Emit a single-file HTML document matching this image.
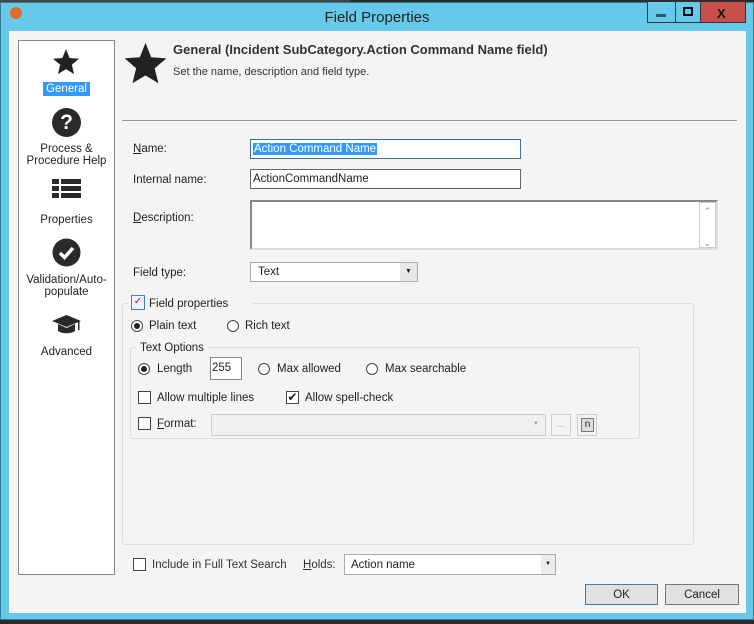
<!DOCTYPE html>
<html><head><style>
*{box-sizing:border-box;margin:0;padding:0}
body{width:754px;height:624px;background:#2b2b2b;position:relative;overflow:hidden;font-family:"Liberation Sans",sans-serif;font-size:11.5px;color:#222}
.a{position:absolute}
.t{position:absolute;white-space:nowrap;margin-top:1px}
.inp{position:absolute;background:#fff;border:1px solid #7a7a7a}
.rad{position:absolute;width:12px;height:12px;border:1px solid #444;border-radius:50%;background:#fff}
.rad.on::after{content:"";position:absolute;left:2px;top:2px;width:6px;height:6px;border-radius:50%;background:#222}
.cb{position:absolute;width:13px;height:13px;border:1px solid #444;background:#fff}
.grp{position:absolute;border:1px solid #dcdcdc;border-radius:3px}
u{text-decoration:underline}
</style></head><body>
<div class="a" style="left:0;top:0;width:350px;height:2px;background:#444"></div>
<div class="a" style="left:0;top:2px;width:754px;height:618px;background:#66c9ea;border:1px solid #3a7a99"></div>
<div class="a" style="left:10px;top:7px;width:12px;height:12px;border-radius:50%;background:#e06a2a"></div>
<div class="t" style="left:0;width:754px;text-align:center;top:8px;font-size:15px;color:#222">Field Properties</div>
<div class="a" style="left:647px;top:1px;width:99px;height:22px;border:1px solid #333;background:#66c9ea"></div>
<div class="a" style="left:675px;top:1px;width:1px;height:22px;background:#333"></div>
<div class="a" style="left:700px;top:1px;width:46px;height:22px;background:#c7514a;border:1px solid #333"></div>
<div class="a" style="left:656px;top:14px;width:10px;height:3px;background:#2a5a70"></div>
<div class="a" style="left:683px;top:7px;width:10px;height:9px;border:2px solid #111"></div>
<div class="t" style="left:717px;top:5px;font-size:13px;font-weight:bold;color:#111">X</div>
<div class="a" style="left:9px;top:31px;width:737px;height:582px;background:#f4f4f4"></div>

<div class="a" style="left:18px;top:40px;width:97px;height:535px;background:#fff;border:1px solid #888"></div>
<svg class="a" style="left:52px;top:48px" width="28" height="28" viewBox="0 0 24 24"><path d="M12 1l3.1 7.6 8 .6-6.1 5.2 1.9 8L12 18.1 5.1 22.4l1.9-8L.9 9.2l8-.6z" fill="#222"/></svg>
<div class="t" style="left:43px;top:81px;background:#3399ff;color:#fff;padding:1px 3px;font-size:11.5px">General</div>
<div class="a" style="left:52px;top:108px;width:29px;height:29px;border-radius:50%;background:#2a2a2a;color:#fff;font-weight:bold;font-size:21px;text-align:center;line-height:29px">?</div>
<div class="t" style="left:18px;width:97px;text-align:center;top:142px;line-height:12px">Process &amp;<br>Procedure Help</div>
<svg class="a" style="left:52px;top:179px" width="29" height="20"><g fill="#2a2a2a"><rect x="0" y="0" width="7" height="5"/><rect x="9" y="0" width="20" height="5"/><rect x="0" y="7" width="7" height="5"/><rect x="9" y="7" width="20" height="5"/><rect x="0" y="14" width="7" height="5"/><rect x="9" y="14" width="20" height="5"/></g></svg>
<div class="t" style="left:18px;width:97px;text-align:center;top:213px">Properties</div>
<svg class="a" style="left:52px;top:238px" width="29" height="29"><circle cx="14.5" cy="14.5" r="14" fill="#2a2a2a"/><path d="M8 15l4.5 4.5L21 10" stroke="#fff" stroke-width="3.5" fill="none"/></svg>
<div class="t" style="left:18px;width:97px;text-align:center;top:273px;line-height:12px">Validation/Auto-<br>populate</div>
<svg class="a" style="left:52px;top:314px" width="29" height="22"><path d="M14.5 1L29 7l-14.5 6L0 7z" fill="#2a2a2a"/><path d="M6 10v7c4 3 13 3 17 0v-7l-8.5 4z" fill="#2a2a2a"/><rect x="26" y="7" width="1.5" height="9" fill="#2a2a2a"/></svg>
<div class="t" style="left:18px;width:97px;text-align:center;top:345px">Advanced</div>

<svg class="a" style="left:123px;top:42px" width="45" height="44" viewBox="0 0 24 24"><path d="M12 .5l3.1 7.8 8.3.6-6.4 5.4 2 8.2L12 18.2 4.9 22.5l2-8.2L.6 8.9l8.3-.6z" fill="#222"/></svg>
<div class="t" style="left:173px;top:41px;font-weight:bold;font-size:13px;color:#333">General (Incident SubCategory.Action Command Name field)</div>
<div class="t" style="left:173px;top:65px;font-size:11px;color:#333">Set the name, description and field type.</div>
<div class="a" style="left:122px;top:120px;width:615px;height:1px;background:#999"></div>

<div class="t" style="left:133px;top:142px"><u>N</u>ame:</div>
<div class="t" style="left:133px;top:173px">Internal name:</div>
<div class="t" style="left:133px;top:211px"><u>D</u>escription:</div>
<div class="t" style="left:133px;top:266px">Field type:</div>
<div class="inp" style="left:250px;top:139px;width:271px;height:20px;border-color:#3c6e9e"><span class="a" style="left:2px;top:3px;background:#3399ff;color:#fff;padding:0 1px">Action Command Name</span></div>
<div class="inp" style="left:250px;top:169px;width:271px;height:20px;border-color:#666"><span class="a" style="left:2px;top:3px">ActionCommandName</span></div>
<div class="inp" style="left:250px;top:200px;width:468px;height:50px;border:2px solid #888;border-right-color:#ddd;border-bottom-color:#ddd"><div class="a" style="right:0;top:0;width:17px;height:46px;border:1px solid #ccc;color:#888;font-size:9px;text-align:center;line-height:16px">⌃<br><br>⌄</div></div>
<div class="inp" style="left:250px;top:262px;width:168px;height:20px;border-color:#aaa"><span class="a" style="left:7px;top:3px">Text</span><div class="a" style="right:0;top:0;width:17px;height:18px;background:#e8e8e8;font-size:7px;text-align:center;line-height:18px">▼</div></div>

<div class="grp" style="left:122px;top:303px;width:572px;height:242px"></div>
<div class="a" style="left:128px;top:295px;width:125px;height:14px;background:#f4f4f4"></div>
<div class="a" style="left:131px;top:295px;width:14px;height:15px;border:1px solid #4a7fb5;background:#eef4fb;color:#c00;font-size:10px;line-height:12px;text-align:center">✓</div>
<div class="t" style="left:149px;top:297px">Field properties</div>
<div class="rad on" style="left:131px;top:320px"></div><div class="t" style="left:149px;top:319px">Plain text</div>
<div class="rad" style="left:227px;top:320px"></div><div class="t" style="left:245px;top:319px">Rich text</div>

<div class="grp" style="left:130px;top:347px;width:510px;height:92px"></div>
<div class="a" style="left:136px;top:341px;width:72px;height:12px;background:#f4f4f4"></div>
<div class="t" style="left:140px;top:341px">Text Options</div>
<div class="rad on" style="left:138px;top:363px"></div><div class="t" style="left:157px;top:362px">Length</div>
<div class="inp" style="left:210px;top:357px;width:32px;height:23px;border-color:#888"><span class="a" style="left:1px;top:4px">255</span></div>
<div class="rad" style="left:258px;top:363px"></div><div class="t" style="left:277px;top:362px">Max allowed</div>
<div class="rad" style="left:366px;top:363px"></div><div class="t" style="left:385px;top:362px">Max searchable</div>
<div class="cb" style="left:138px;top:391px"></div><div class="t" style="left:157px;top:391px">Allow multiple lines</div>
<div class="cb" style="left:286px;top:391px;font-size:12px;line-height:11px;text-align:center">✔</div><div class="t" style="left:305px;top:391px">Allow spell-check</div>
<div class="cb" style="left:138px;top:417px"></div><div class="t" style="left:157px;top:417px"><u>F</u>ormat:</div>
<div class="a" style="left:211px;top:414px;width:335px;height:22px;border:1px solid #ccc;background:#f0f0f0"><span class="a" style="right:6px;top:6px;font-size:6px;color:#999">▼</span></div>
<div class="a" style="left:551px;top:414px;width:20px;height:22px;border:1px solid #ccc;color:#999;font-size:10px;text-align:center;line-height:20px">...</div>
<div class="a" style="left:577px;top:414px;width:20px;height:22px;border:1px solid #ccc"><div class="a" style="left:3px;top:3px;width:13px;height:14px;border:1px solid #777;background:#ddd;font-size:10px;text-align:center;line-height:11px">n</div></div>

<div class="cb" style="left:133px;top:558px"></div><div class="t" style="left:152px;top:558px;color:#333">Include in Full Text Search</div>
<div class="t" style="left:303px;top:558px;color:#333"><u>H</u>olds:</div>
<div class="inp" style="left:344px;top:554px;width:212px;height:21px;border-color:#aaa"><span class="a" style="left:6px;top:4px">Action name</span><div class="a" style="right:0;top:0;width:14px;height:19px;background:#ececec;font-size:6px;text-align:center;line-height:19px">▼</div></div>
<div class="a" style="left:585px;top:584px;width:73px;height:21px;border:1px solid #3c7fb1;background:#e1e1e1;text-align:center;line-height:20px">OK</div>
<div class="a" style="left:665px;top:584px;width:74px;height:21px;border:1px solid #777;background:#e1e1e1;text-align:center;line-height:20px">Cancel</div>
</body></html>
